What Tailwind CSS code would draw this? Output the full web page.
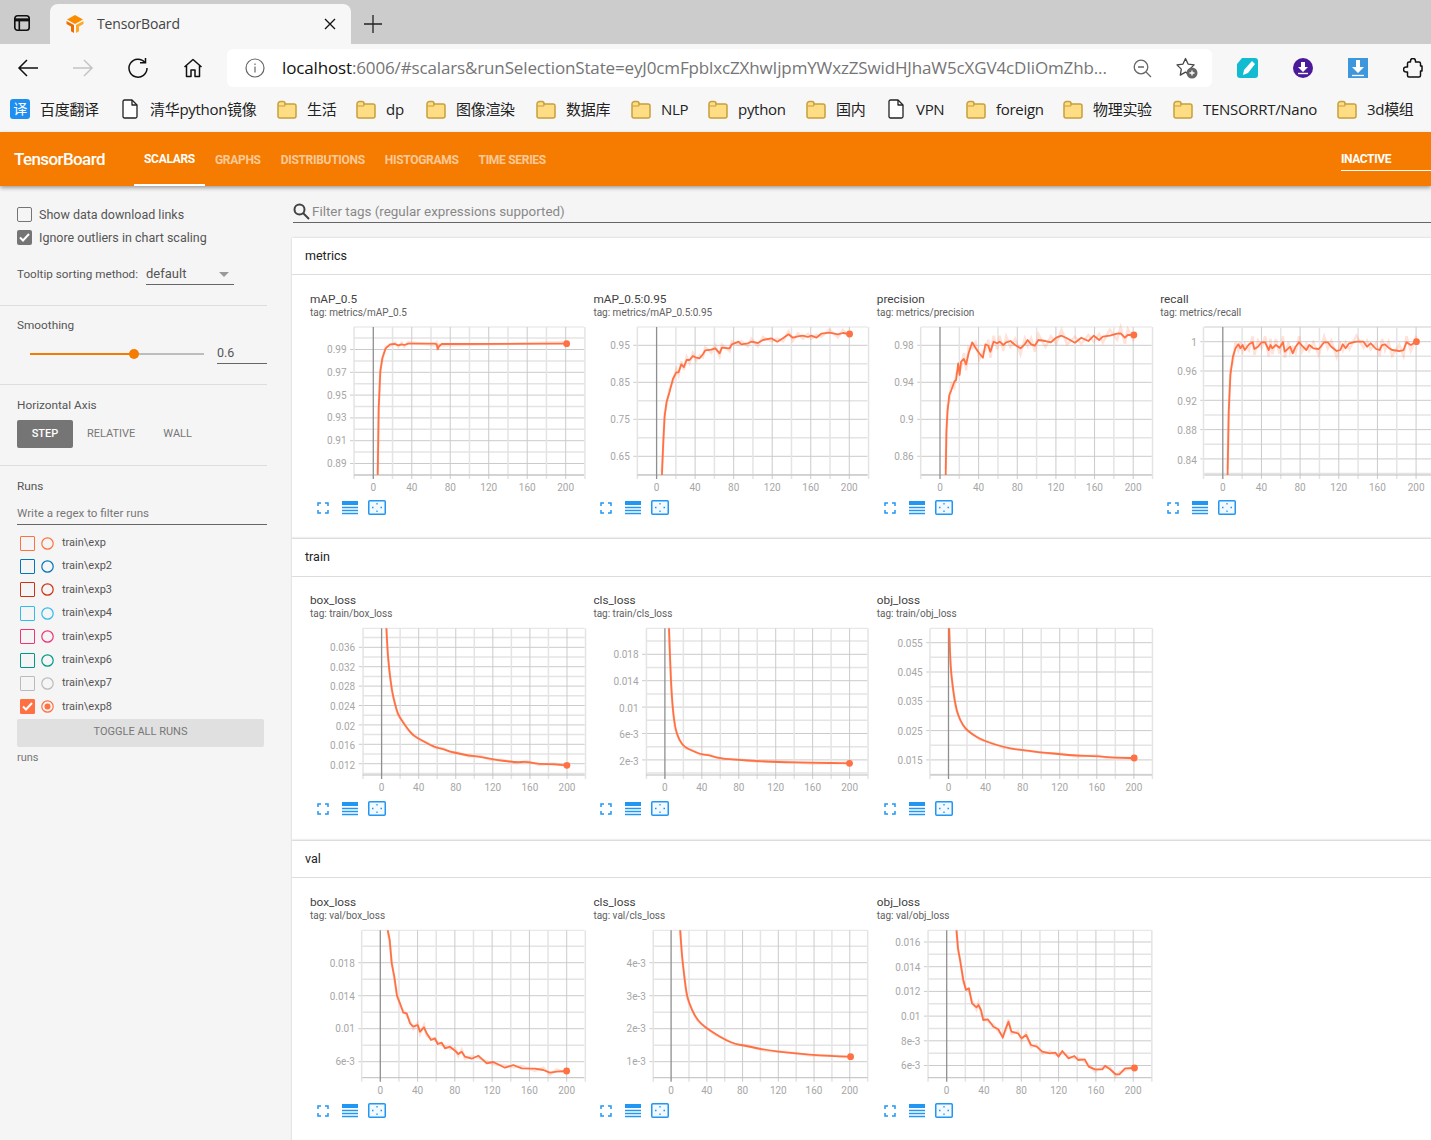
<!DOCTYPE html>
<html lang="en">
<head>
  <meta charset="UTF-8" />
  <meta name="viewport" content="width=device-width, initial-scale=1.0"/>
  <title>TensorBoard</title>
  <script src="https://cdn.jsdelivr.net/npm/@tailwindcss/browser@4"></script>
</head>
<body class="w-[1431px] h-[1140px] overflow-hidden bg-[#f5f5f5] font-['Roboto',sans-serif] text-[#424242]">

  <!-- browser tabs -->
  <div class="h-[44px] bg-[#cccccc] flex items-end">
    <div class="w-[50px] h-[40px] flex items-center justify-center pb-[2px] pr-[6px]">
      <svg width="18" height="18" viewBox="0 0 20 20" fill="none" stroke="#111" stroke-width="1.800"><rect x="2" y="2" width="16" height="16" rx="3"/><path d="M2 6.500h16" stroke-width="3.400"/><path d="M7 6v12"/></svg>
    </div>
    <div class="w-[301px] h-[40px] pb-[1px] bg-[#f7f7f7] rounded-t-lg flex items-center pl-[15px] font-['Open_Sans',sans-serif]">
      <svg width="20" height="20" viewBox="0 0 20 20"><path d="M10 1l8 4.500-8 4.500-8-4.500z" fill="#fb8c00"/><path d="M1.500 7l7.500 4v8l-3-1.700v-4.800l-4.500-2.500z" fill="#ef6c00"/><path d="M18.500 7l-7.500 4v8l3-1.700v-4.800l4.500-2.500z" fill="#ffa726"/></svg>
      <span class="ml-[12px] pb-[1px] text-[14px] tracking-[-0.15px] text-[#444]">TensorBoard</span>
      <svg class="ml-auto mr-[15px]" width="12" height="12" viewBox="0 0 12 12" stroke="#111" stroke-width="1.300"><path d="M1 1l10 10M11 1L1 11"/></svg>
    </div>
    <div class="w-[44px] h-[40px] flex items-center justify-center">
      <svg width="20" height="20" viewBox="0 0 20 20" stroke="#222" stroke-width="1.300"><path d="M10 1v18M1 10h18"/></svg>
    </div>
  </div>

  <!-- browser toolbar -->
  <div class="h-[44px] pt-[4px] bg-[#f7f7f7] flex items-center font-['Open_Sans',sans-serif]">
    <div class="w-[55px] shrink-0 flex justify-center">
      <svg width="22" height="20" viewBox="0 0 22 20" fill="none" stroke="#111" stroke-width="1.500"><path d="M21 10H2M10 2l-8 8 8 8"/></svg>
    </div>
    <div class="w-[55px] shrink-0 flex justify-center">
      <svg width="22" height="20" viewBox="0 0 22 20" fill="none" stroke="#c4c4c4" stroke-width="1.500"><path d="M1 10h19M12 2l8 8-8 8"/></svg>
    </div>
    <div class="w-[55px] shrink-0 flex justify-center">
      <svg width="22" height="22" viewBox="0 0 22 22" fill="none" stroke="#111" stroke-width="1.500"><path d="M18 5.500A9 9 0 1 0 20 11"/><path d="M13 5.800h5.500V1"/></svg>
    </div>
    <div class="w-[55px] shrink-0 flex justify-center">
      <svg width="20" height="20" viewBox="0 0 20 20" fill="none" stroke="#111" stroke-width="1.500" stroke-linejoin="round"><path d="M1.500 9L10 1.500 18.500 9M3.500 7.500V18.500h4.500v-6.500h4v6.500h4.500V7.500"/></svg>
    </div>
    <div class="ml-[7px] w-[985px] shrink-0 h-[38px] bg-white rounded-md flex items-center">
      <div class="w-[55px] shrink-0 flex justify-center">
        <svg width="20" height="20" viewBox="0 0 20 20" fill="none" stroke="#666" stroke-width="1.200"><circle cx="10" cy="10" r="9"/><path d="M10 8.500v6M10 5.500v1.500"/></svg>
      </div>
      <div class="w-[835px] shrink-0 whitespace-nowrap text-[17px] tracking-[-0.14px] text-[#757575]"><span class="text-[#111]">localhost</span>:6006/#scalars&amp;runSelectionState=eyJ0cmFpblxcZXhwIjpmYWxzZSwidHJhaW5cXGV4cDIiOmZhb...</div>
      <div class="ml-[11px] w-[28px] shrink-0 flex justify-center">
        <svg width="19" height="19" viewBox="0 0 19 19" fill="none" stroke="#666" stroke-width="1.300"><circle cx="8" cy="8" r="6.800"/><path d="M5 8h6M13 13l5 5"/></svg>
      </div>
      <div class="ml-[17px] w-[28px] shrink-0 flex justify-center">
        <svg width="22" height="22" viewBox="0 0 22 22" fill="none" stroke="#444" stroke-width="1.300" stroke-linejoin="round"><path d="M9.500 1.500l2.600 5.600 6 .8-4.400 4.200 1 6-5.200-3-5.200 3 1-6L1 7.900l6-.8z"/><circle cx="16" cy="16" r="5.500" fill="#666" stroke="none"/><path d="M13.500 16h5M16 13.500v5" stroke="#fff"/></svg>
      </div>
    </div>
    <div class="ml-[8px] w-[55px] shrink-0 flex justify-center">
      <svg width="21" height="20" viewBox="0 0 21 20"><path d="M5 0h13a3 3 0 0 1 3 3v14a3 3 0 0 1-3 3H3a3 3 0 0 1-3-3V6z" fill="#12bcd0"/><path d="M15 3l3 3-7 9-5 2 1-5z" fill="#fff"/></svg>
    </div>
    <div class="w-[55px] shrink-0 flex justify-center">
      <svg width="20" height="20" viewBox="0 0 20 20"><circle cx="10" cy="10" r="10" fill="#4a1a9a"/><path d="M8 4h4v5h3l-5 5-5-5h3z" fill="#fff"/><path d="M5 15.500h10" stroke="#fff" stroke-width="1.400"/></svg>
    </div>
    <div class="w-[55px] shrink-0 flex justify-center">
      <svg width="20" height="20" viewBox="0 0 20 20"><rect width="20" height="20" fill="#3d97dd"/><path d="M8 2h4v7h4l-6 6-6-6h4z" fill="#fff"/><path d="M4 17.500h12" stroke="#fff" stroke-width="1.300"/></svg>
    </div>
    <div class="w-[55px] shrink-0 flex justify-center">
      <svg width="20" height="20" viewBox="0 0 20 20" fill="none" stroke="#111" stroke-width="1.500" stroke-linejoin="round"><path d="M7.500 4V3a2.500 2.500 0 0 1 5 0v1h3.500a1.500 1.500 0 0 1 1.500 1.500V8H19v5h-1.500v4.500A1.500 1.500 0 0 1 16 19H6a1.500 1.500 0 0 1-1.500-1.500V14H3a2.500 2.500 0 0 1 0-5h1.500V5.500A1.500 1.500 0 0 1 6 4z"/></svg>
    </div>
  </div>

  <!-- bookmarks, filled in below -->
  <div id="bookmarks" class="h-[44px] pb-[2px] bg-[#f7f7f7] flex items-center pl-[10px] text-[15px] tracking-[-0.3px] text-[#222] font-['Open_Sans','Noto_Sans_CJK_SC',sans-serif]"></div>

  <!-- tensorboard header -->
  <header class="relative h-[54px] bg-[#f57c00] text-white flex items-center shadow-[0_2px_4px_rgba(0,0,0,0.35)]">
    <div class="w-[134px] pl-[14px] pt-[1px] text-[17px] font-medium tracking-[-0.6px]">TensorBoard</div>
    <nav class="flex h-full text-[12px] font-bold tracking-[-0.3px] text-white/60">
      <a class="px-[10px] pt-[2px] flex items-center text-white border-b-2 border-white">SCALARS</a>
      <a class="px-[10px] pt-[2px] flex items-center">GRAPHS</a>
      <a class="px-[10px] pt-[2px] flex items-center">DISTRIBUTIONS</a>
      <a class="px-[10px] pt-[2px] flex items-center">HISTOGRAMS</a>
      <a class="px-[10px] pt-[2px] flex items-center">TIME SERIES</a>
    </nav>
    <div class="ml-auto w-[90px] h-[26px] mb-[2px] pt-[5px] border-b border-white text-[12px] font-bold tracking-[-0.4px]">INACTIVE</div>
  </header>

  <div class="flex">
    <!-- sidebar -->
    <aside class="w-[292px] shrink-0 text-[11.800px] text-[#555]">
      <div class="w-[267px] h-[120px] pl-[17px] pt-[21px] border-b border-[#ddd]">
        <label class="flex items-center h-[15px] text-[12.500px]">
          <span class="w-[15px] h-[15px] border border-[#757575] rounded-[2px]"></span>
          <span class="ml-[7px] pt-[1px]">Show data download links</span>
        </label>
        <label class="flex items-center h-[15px] mt-[8px] text-[12.500px]">
          <span class="w-[15px] h-[15px] bg-[#757575] rounded-[2px] flex items-center justify-center">
            <svg width="11" height="9" viewBox="0 0 11 9" fill="none" stroke="#fff" stroke-width="2"><path d="M1 4.500l3 3 6-6.500"/></svg>
          </span>
          <span class="ml-[7px] pt-[1px]">Ignore outliers in chart scaling</span>
        </label>
        <div class="flex items-start mt-[14px] h-[26px]">
          <span class="w-[129px] leading-[30px] text-[11.700px]">Tooltip sorting method:</span>
          <div class="w-[88px] h-[26px] border-b border-[#666] flex items-center text-[13px] pt-[4px] relative">default
            <span class="absolute right-[5px] top-[13px] w-0 h-0 border-x-[5px] border-x-transparent border-t-[5px] border-t-[#999]"></span>
          </div>
        </div>
      </div>
      <div class="w-[267px] h-[79px] pl-[17px] pt-[12px] border-b border-[#ddd]">
        <div class="leading-[15px]">Smoothing</div>
        <div class="flex items-start mt-[11px]">
          <div class="relative ml-[13px] mt-[9px] w-[174px] h-[2px] bg-[#bdbdbd]">
            <div class="h-[2px] w-[104px] bg-[#f57c00]"></div>
            <span class="absolute left-[99px] top-[-4px] w-[10px] h-[10px] rounded-full bg-[#f57c00]"></span>
          </div>
          <div class="ml-[13px] w-[50px] h-[20px] border-b border-[#666] text-[12.500px] leading-[18px]">0.6</div>
        </div>
      </div>
      <div class="w-[267px] h-[81px] pl-[17px] pt-[13px] border-b border-[#ddd]">
        <div class="leading-[15px]">Horizontal Axis</div>
        <div class="flex items-center mt-[7px] text-[11px] text-[#777]">
          <span class="w-[56px] h-[28px] bg-[#757575] rounded-[2px] text-white font-medium flex items-center justify-center">STEP</span>
          <span class="ml-[14px]">RELATIVE</span>
          <span class="ml-[28px]">WALL</span>
        </div>
      </div>
      <div class="w-[267px] pl-[17px] pt-[13px]">
        <div class="leading-[15px]">Runs</div>
        <div class="h-[31px] border-b border-[#666] pt-[12px] leading-[14px] text-[11.600px] text-[#777]">Write a regex to filter runs</div>
        <div id="runs" class="pt-[6.500px]"></div>
        <div class="w-[247px] h-[28px] bg-[#e0e0e0] rounded-[2px] flex items-center justify-center text-[11px] text-[#777]">TOGGLE ALL RUNS</div>
        <div class="mt-[4px] text-[11px] leading-[13px] text-[#777]">runs</div>
      </div>
    </aside>

    <!-- scalars -->
    <main class="flex-1 min-w-0">
      <div class="ml-[1px] h-[37px] border-b border-[#666] flex items-end pb-[1px]">
        <svg class="mb-[1px]" width="17" height="17" viewBox="0 0 17 17" fill="none" stroke="#424242" stroke-width="2"><circle cx="6.500" cy="6.500" r="5"/><path d="M10 10l6 6"/></svg>
        <span class="ml-[2px] text-[13.400px] text-[#888] leading-[18px]">Filter tags (regular expressions supported)</span>
      </div>
      <section class="mt-[15px] bg-white h-[300px] shadow-[0_0_2px_rgba(0,0,0,0.2)]">
        <div class="h-[37px] pl-[13px] flex items-center border-b border-[#ddd] text-[12.500px] text-[#222]">metrics</div>
        <div id="metrics" class="flex pl-[18px] pt-[17px]"></div>
      </section>
      <section class="bg-white h-[302px] border-t border-[#ddd] shadow-[0_0_2px_rgba(0,0,0,0.2)]">
        <div class="h-[38px] pl-[13px] flex items-center border-b border-[#ddd] text-[12.500px] text-[#222]">train</div>
        <div id="train" class="flex pl-[18px] pt-[16px]"></div>
      </section>
      <section class="bg-white h-[302px] border-t border-[#ddd] shadow-[0_0_2px_rgba(0,0,0,0.2)]">
        <div class="h-[37px] pl-[13px] flex items-center border-b border-[#ddd] text-[12.500px] text-[#222]">val</div>
        <div id="val" class="flex pl-[18px] pt-[17px]"></div>
      </section>
    </main>
  </div>

  <script>
    const folderIcon = '<svg width="20" height="19" viewBox="0 0 20 19"><path d="M1 4a2.500 2.500 0 0 1 2.500-2.500H6a2 2 0 0 1 2 2V4h9a2 2 0 0 1 2 2v10a2 2 0 0 1-2 2H3a2 2 0 0 1-2-2z" fill="#fedd85" stroke="#c8a03c" stroke-width="1.500"/><path d="M1.500 6H8V3" fill="none" stroke="#c8a03c"/></svg>';
    const docIcon = '<svg class="mr-[2px]" width="16" height="20" viewBox="0 0 16 20" fill="#fff" stroke="#222" stroke-width="1.300" stroke-linejoin="round"><path d="M2.500 1H10l5 5v11.500a1.500 1.500 0 0 1-1.500 1.500h-11A1.500 1.500 0 0 1 1 17.500v-15A1.500 1.500 0 0 1 2.500 1z"/><path d="M10 1v5h5" fill="none"/></svg>';
    const transIcon = '<span class="w-[20px] h-[20px] rounded-[3px] bg-[#1f8ef1] text-white text-[14px] leading-[20px] text-center">译</span>';
    // icon, label, distance to the next bookmark
    const bookmarks = [
      [transIcon, '百度翻译', 112], [docIcon, '清华python镜像', 155], [folderIcon, '生活', 79], [folderIcon, 'dp', 70],
      [folderIcon, '图像渲染', 110], [folderIcon, '数据库', 95], [folderIcon, 'NLP', 77], [folderIcon, 'python', 98],
      [folderIcon, '国内', 82], [docIcon, 'VPN', 78], [folderIcon, 'foreign', 97], [folderIcon, '物理实验', 110],
      [folderIcon, 'TENSORRT/Nano', 164], [folderIcon, '3d模组', 80]
    ];
    document.getElementById('bookmarks').innerHTML = bookmarks.map(([icon, name, w]) =>
      `<div class="flex shrink-0 items-center gap-[10px] whitespace-nowrap" style="width:${w}px">${icon}<span>${name}</span></div>`).join('');

    const runs = [
      ['train\\exp', '#ff7043'], ['train\\exp2', '#0077bb'], ['train\\exp3', '#cc3311'], ['train\\exp4', '#33bbee'],
      ['train\\exp5', '#ee3377'], ['train\\exp6', '#009988'], ['train\\exp7', '#bbbbbb'], ['train\\exp8', '#ff7043', true]
    ];
    document.getElementById('runs').innerHTML = runs.map(([name, color, on]) => `
      <div class="flex items-center h-[23.400px] text-[11px]">
        <span class="ml-[3px] w-[15px] h-[15px] rounded-[1px] border-[1.500px] flex items-center justify-center" style="border-color:${color};background:${on ? color : 'transparent'}">
          ${on ? '<svg width="11" height="9" viewBox="0 0 11 9" fill="none" stroke="#fff" stroke-width="2"><path d="M1 4.500l3 3 6-6.500"/></svg>' : ''}
        </span>
        <svg class="ml-[6px]" width="13" height="13" viewBox="0 0 13 13"><circle cx="6.500" cy="6.500" r="5.700" fill="none" stroke="${color}" stroke-width="1.200"/>${on ? `<circle cx="6.500" cy="6.500" r="3" fill="${color}"/>` : ''}</svg>
        <span class="ml-[8px]">${name}</span>
      </div>`).join('');

    // x positions are in steps, curves are traced in the coordinates of a crop: [originX, originY, scaleX, scaleY]
    const charts = {
      metrics: { svgTop: 323, top: 327, bottom: 475, items: [
        { title: 'mAP_0.5', tag: 'metrics/mAP_0.5', left: 354, zero: 373.3, end: 565.7, right: 584, noise: 1.1,
          ticks: [['0.99', 349.5], ['0.97', 372.3], ['0.95', 395], ['0.93', 417.5], ['0.91', 440.5], ['0.89', 463]],
          crop: [295, 285, 3, 3],
          pts: [[248,570],[251,370],[256,260],[262,220],[272,190],[285,178],[300,177],[310,181],[320,178],[328,180],[340,176],[420,176],[425,178],[428,192],[432,184],[440,177],[815,176]] },
        { title: 'mAP_0.5:0.95', tag: 'metrics/mAP_0.5:0.95', left: 637.7, zero: 657, end: 849.7, right: 868, noise: 2,
          ticks: [['0.95', 345.3], ['0.85', 382.3], ['0.75', 419.3], ['0.65', 456.3]],
          crop: [585, 285, 3, 3],
          pts: [[232,570],[236,470],[240,395],[246,350],[255,320],[265,282],[275,262],[282,262],[290,238],[298,246],[306,225],[315,225],[325,213],[335,218],[345,220],[355,208],[362,196],[380,194],[392,190],[405,205],[412,188],[435,190],[442,178],[462,170],[470,178],[490,175],[500,170],[520,174],[535,165],[560,160],[578,170],[595,160],[612,148],[625,158],[640,154],[655,152],[670,156],[680,152],[695,158],[710,146],[735,143],[760,148],[775,144],[795,147]] },
        { title: 'precision', tag: 'metrics/precision', left: 921, zero: 939.8, end: 1133, right: 1151.6, noise: 4,
          ticks: [['0.98', 345.3], ['0.94', 382.3], ['0.9', 419.3], ['0.86', 456.3]],
          crop: [870, 285, 2.795, 3],
          pts: [[211,570],[213,440],[216,380],[221,330],[227,315],[235,290],[240,285],[246,235],[250,270],[254,230],[262,222],[268,238],[275,205],[285,172],[295,190],[305,205],[315,218],[322,178],[330,182],[336,200],[345,170],[355,175],[362,170],[372,180],[380,172],[392,168],[405,180],[420,190],[432,178],[440,165],[450,178],[460,182],[470,165],[490,168],[505,172],[520,158],[535,152],[550,160],[572,173],[590,158],[610,168],[625,152],[640,165],[650,155],[670,152],[690,146],[700,145],[712,158],[720,150],[737,150]] },
        { title: 'recall', tag: 'metrics/recall', left: 1204.5, zero: 1223, end: 1416.3, right: 1435, noise: 4,
          ticks: [['1', 341.7], ['0.96', 371], ['0.92', 400.7], ['0.88', 430.3], ['0.84', 460]],
          crop: [870, 285, 2.795, 3],
          pts: [[1000,570],[1003,380],[1008,270],[1015,215],[1022,190],[1030,178],[1036,190],[1042,180],[1048,195],[1060,178],[1070,172],[1075,192],[1085,185],[1095,172],[1105,172],[1115,195],[1120,180],[1125,190],[1135,180],[1145,188],[1155,172],[1160,200],[1170,190],[1175,185],[1182,205],[1190,185],[1200,172],[1208,182],[1220,195],[1228,180],[1240,190],[1255,192],[1270,172],[1280,172],[1290,185],[1305,198],[1315,195],[1322,178],[1330,190],[1340,175],[1360,170],[1380,170],[1390,185],[1400,175],[1415,192],[1425,195],[1432,180],[1440,178],[1450,188],[1460,195],[1480,198],[1492,195],[1500,172],[1512,180],[1528,170]] }
      ]},
      train: { svgTop: 625, top: 629.3, bottom: 776, items: [
        { title: 'box_loss', tag: 'train/box_loss', left: 362.7, zero: 381.6, end: 567, right: 584.7, noise: 0.6,
          ticks: [['0.036', 648.3], ['0.032', 667.7], ['0.028', 687.5], ['0.024', 707], ['0.02', 726.7], ['0.016', 746.3], ['0.012', 765.7]],
          crop: [295, 535, 2.703, 3],
          pts: [[247,283],[250,350],[255,410],[262,470],[270,510],[278,540],[290,562],[305,585],[320,605],[340,617],[360,630],[380,640],[400,645],[420,653],[440,658],[470,665],[500,668],[530,675],[560,680],[600,685],[625,683],[660,690],[700,691],[735,694]] },
        { title: 'cls_loss', tag: 'train/cls_loss', left: 646.5, zero: 665.3, end: 850, right: 868, noise: 0.5,
          ticks: [['0.018', 655.3], ['0.014', 681.7], ['0.01', 708.7], ['6e-3', 735.5], ['2e-3', 762.3]],
          crop: [295, 535, 2.703, 3],
          pts: [[1012,283],[1015,380],[1020,500],[1028,580],[1040,620],[1055,640],[1075,650],[1095,660],[1120,664],[1150,673],[1200,678],[1250,681],[1300,684],[1400,686],[1500,688]] },
        { title: 'obj_loss', tag: 'train/obj_loss', left: 930, zero: 948.3, end: 1133.7, right: 1151.7, noise: 0.5,
          ticks: [['0.055', 643.7], ['0.045', 673], ['0.035', 702], ['0.025', 731.7], ['0.015', 761]],
          crop: [870, 590, 3, 3],
          pts: [[237,118],[240,220],[248,300],[258,360],[270,395],[285,418],[305,435],[330,450],[360,462],[400,474],[440,482],[465,483],[490,489],[530,491],[570,496],[620,500],[680,501],[710,505],[760,507],[792,507]] }
      ]},
      val: { svgTop: 926, top: 930.3, bottom: 1077.7, items: [
        { title: 'box_loss', tag: 'val/box_loss', left: 362.3, zero: 380.3, end: 566.7, right: 584.3, noise: 1.5,
          ticks: [['0.018', 962.7], ['0.014', 995.7], ['0.01', 1028.3], ['6e-3', 1061.3]],
          crop: [295, 890, 3, 3],
          pts: [[278,121],[284,150],[290,220],[298,260],[306,318],[315,340],[325,368],[335,370],[345,400],[355,410],[368,405],[375,425],[387,412],[395,430],[408,450],[420,445],[428,462],[440,458],[450,475],[465,470],[480,482],[490,492],[500,485],[510,500],[530,506],[550,497],[575,520],[595,516],[630,533],[655,525],[680,535],[720,536],[745,540],[765,548],[785,545],[815,543]] },
        { title: 'cls_loss', tag: 'val/cls_loss', left: 653.8, zero: 671.5, end: 850.2, right: 868, noise: 0.5,
          ticks: [['4e-3', 962.7], ['3e-3', 995.7], ['2e-3', 1028.3], ['1e-3', 1061.3]],
          crop: [585, 890, 2.658, 3],
          pts: [[254,121],[258,190],[265,260],[272,320],[285,360],[300,390],[320,412],[345,430],[375,450],[400,462],[430,468],[480,480],[540,488],[600,494],[650,498],[707,500]] },
        { title: 'obj_loss', tag: 'val/obj_loss', left: 927.7, zero: 946.5, end: 1133, right: 1151.2, noise: 1.5,
          ticks: [['0.016', 942], ['0.014', 966.7], ['0.012', 991.5], ['0.01', 1016], ['8e-3', 1040.7], ['6e-3', 1065.5]],
          crop: [585, 890, 2.658, 3],
          pts: [[987,121],[991,175],[997,215],[1005,270],[1012,300],[1020,295],[1028,340],[1040,352],[1045,345],[1052,360],[1058,390],[1070,388],[1085,410],[1098,418],[1110,443],[1118,415],[1125,395],[1133,425],[1150,430],[1160,445],[1172,435],[1185,465],[1200,470],[1215,485],[1235,490],[1250,488],[1258,500],[1268,483],[1285,505],[1300,498],[1310,510],[1328,508],[1338,530],[1355,538],[1375,538],[1382,527],[1395,538],[1410,553],[1420,553],[1435,535],[1460,534]] }
      ]}
    };

    const CARD_W = 283.4;
    const LINE = '#ff7043';

    // rounded path through the midpoints, for the calm curves
    function smoothPath(p) {
      let d = `M${p[0][0].toFixed(1)} ${p[0][1].toFixed(1)}`;
      for (let i = 1; i < p.length - 1; i++) {
        const mx = (p[i][0] + p[i + 1][0]) / 2, my = (p[i][1] + p[i + 1][1]) / 2;
        d += ` Q${p[i][0].toFixed(1)} ${p[i][1].toFixed(1)} ${mx.toFixed(1)} ${my.toFixed(1)}`;
      }
      const last = p[p.length - 1];
      return d + ` L${last[0].toFixed(1)} ${last[1].toFixed(1)}`;
    }

    function drawPlot(c, g, cardX) {
      const { top, bottom, svgTop } = g;
      const stepX = (c.end - c.zero) / 200;
      let s = '';

      // horizontal grid, major at the labelled ticks, a lighter one half way
      const gap = c.ticks[1][1] - c.ticks[0][1];
      for (let y = c.ticks[0][1] - gap / 2 * Math.floor((c.ticks[0][1] - top) / (gap / 2)); y <= bottom; y += gap / 2) {
        const major = c.ticks.some(t => Math.abs(t[1] - y) < gap / 4);
        s += major
          ? `<line x1="${c.left - 4}" x2="${c.right}" y1="${y}" y2="${y}" stroke="#cbcbcb"/>`
          : `<line x1="${c.left}" x2="${c.right}" y1="${y}" y2="${y}" stroke="#e4e4e4" stroke-width="1.500"/>`;
      }
      s += `<line x1="${c.left}" x2="${c.right}" y1="${top}" y2="${top}" stroke="#e2e2e2"/>`;

      // vertical grid every 20 steps
      for (let step = -20; step <= 220; step += 20) {
        const x = c.zero + step * stepX;
        if (step === 0) continue;
        s += step % 40 === 0
          ? `<line x1="${x}" x2="${x}" y1="${top}" y2="${bottom + 4}" stroke="#cbcbcb"/>`
          : `<line x1="${x}" x2="${x}" y1="${top}" y2="${bottom + 4}" stroke="#e4e4e4" stroke-width="1.500"/>`;
      }
      s += `<line x1="${c.left}" x2="${c.right}" y1="${bottom}" y2="${bottom}" stroke="#bdbdbd"/>`;
      s += `<line x1="${c.zero}" x2="${c.zero}" y1="${top}" y2="${bottom + 4}" stroke="#8f8f8f" stroke-width="1.300"/>`;

      // labels
      c.ticks.forEach(([label, y]) => {
        s += `<text x="${c.left - 7.500}" y="${y + 4}" text-anchor="end" font-size="10" fill="#a6a6a6">${label}</text>`;
      });
      for (let step = 0; step <= 200; step += 40) {
        s += `<text x="${c.zero + step * stepX}" y="${bottom + 16.500}" text-anchor="middle" font-size="10" fill="#a6a6a6">${step}</text>`;
      }

      // curve, with the unsmoothed series as a faint band behind it
      const [ox, oy, sx, sy] = c.crop;
      const pts = c.pts.map(([u, v]) => [ox + u / sx, oy + v / sy]);
      const raw = pts.map(([x, y], i) => {
        const off = i % 2 ? c.noise : -c.noise;
        return [x, Math.min(bottom, Math.max(top, y + off * 1.500))];
      });
      const d = p => p.map(q => q[0].toFixed(1) + ',' + q[1].toFixed(1)).join(' ');
      s += `<polyline points="${d(raw)}" fill="none" stroke="${LINE}" stroke-opacity="0.2" stroke-width="2.500"/>`;
      s += c.noise <= 1
        ? `<path d="${smoothPath(pts)}" fill="none" stroke="${LINE}" stroke-width="1.800"/>`
        : `<polyline points="${d(pts)}" fill="none" stroke="${LINE}" stroke-width="1.800" stroke-linejoin="round"/>`;
      const last = pts[pts.length - 1];
      s += `<circle cx="${last[0]}" cy="${last[1]}" r="3.400" fill="${LINE}"/>`;

      return `<svg class="block overflow-visible font-['Roboto',sans-serif]" width="${CARD_W}" height="170" viewBox="${cardX} ${svgTop} ${CARD_W} 170">${s}</svg>`;
    }

    const cardIcons = `
      <div class="flex items-center pl-[7px] mt-[7px] h-[15px]">
        <svg width="12" height="12" viewBox="0 0 12 12" fill="none" stroke="#2196f3" stroke-width="1.500"><path d="M1 4V1h3M8 1h3v3M11 8v3H8M4 11H1V8"/></svg>
        <svg class="ml-[13px]" width="16" height="14" viewBox="0 0 16 14"><rect width="16" height="4" fill="#2196f3"/><path d="M0 6.500h16M0 9.500h16M0 12.500h16" stroke="#2196f3" stroke-width="1.300"/></svg>
        <svg class="ml-[10px]" width="18" height="15" viewBox="0 0 18 15" fill="#f2f9ff" stroke="#2196f3" stroke-width="1.500"><rect x="0.750" y="0.750" width="16.500" height="13.500" rx="1"/><path d="M9 3v1.500M9 10.500V12M4 7.500h1.500M12.500 7.500H14" stroke-width="1.300"/></svg>
      </div>`;

    Object.entries(charts).forEach(([id, group]) => {
      document.getElementById(id).innerHTML = group.items.map((c, i) => `
        <div class="w-[283.400px] shrink-0">
          <div class="text-[11.800px] leading-[14px] text-[#424242]">${c.title}</div>
          <div class="text-[10px] leading-[14px] text-[#616161] mb-[3px]">tag: ${c.tag}</div>
          ${drawPlot(c, group, 310 + CARD_W * i)}
          ${cardIcons}
        </div>`).join('');
    });
  </script>
</body>
</html>
